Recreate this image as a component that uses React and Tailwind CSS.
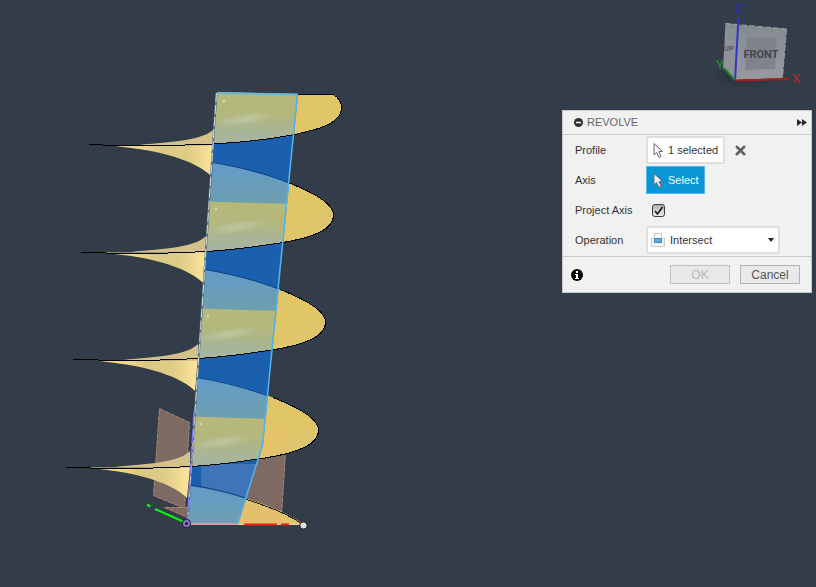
import React from 'react';
import { X } from 'lucide-react';

const FLIGHTS = [
  { id: 0, shift: 'translate(0 0)' },
  { id: 1, shift: 'translate(-8 107)' },
  { id: 2, shift: 'translate(-15 215)' },
];

const HORNS = [
  { id: 0, shift: 'translate(0 0)' },
  { id: 1, shift: 'translate(-8 107)' },
  { id: 2, shift: 'translate(-16 215)' },
  { id: 3, shift: 'translate(-24 322)' },
];

const FLIGHT_PATH =
  'M213 162.500C240 167 266 174 288 182.500C315 193 333.500 204 333.500 215C333.500 231 309 238 283 242.500C258 246.500 232 250 206 251.500Z';

const PROFILE = '217,92 298,94 263,445 238,524 187,524';

const Defs = () => (
  <defs>
    <linearGradient id="gold" x1="0" y1="0" x2="1" y2="1">
      <stop offset="0" stopColor="#ddc36b" />
      <stop offset="0.65" stopColor="#e1c664" />
      <stop offset="1" stopColor="#d9c47a" />
    </linearGradient>
    <linearGradient id="horn" gradientUnits="userSpaceOnUse" x1="112" y1="0" x2="214" y2="0">
      <stop offset="0" stopColor="#f5dc8c" />
      <stop offset="0.35" stopColor="#ecd48a" />
      <stop offset="0.5" stopColor="#dbc883" />
      <stop offset="0.75" stopColor="#dfcc86" />
      <stop offset="1" stopColor="#fde59b" />
    </linearGradient>
    <linearGradient id="sky" gradientUnits="userSpaceOnUse" x1="0" y1="162" x2="0" y2="204">
      <stop offset="0" stopColor="#639bca" />
      <stop offset="1" stopColor="#6d9fae" />
    </linearGradient>
    <linearGradient id="olive" gradientUnits="userSpaceOnUse" x1="0" y1="202" x2="0" y2="250">
      <stop offset="0" stopColor="#b6b979" />
      <stop offset="0.45" stopColor="#b2b77d" />
      <stop offset="0.7" stopColor="#aab591" />
      <stop offset="1" stopColor="#a5b5a1" />
    </linearGradient>
    <radialGradient id="shine">
      <stop offset="0" stopColor="#c4cba9" stopOpacity="0.8" />
      <stop offset="1" stopColor="#c4cba9" stopOpacity="0" />
    </radialGradient>
    <clipPath id="profile">
      <polygon points={PROFILE} />
    </clipPath>
  </defs>
);

const Shine = () => (
  <g>
    <ellipse cx="237" cy="227" rx="32" ry="6" fill="url(#shine)" transform="rotate(-9 237 227)" />
    <circle cx="216" cy="209" r="1.500" fill="#ced7bd" />
  </g>
);

const Model = () => (
  <svg viewBox="60 80 292 456" className="block w-[292px] shrink-0" role="img" aria-label="Helix model">
    <Defs />

    {/* origin planes */}
    <g fill="#7d6b63" stroke="#aa8570" strokeWidth="1" strokeDasharray="5 1">
      <path d="M159.500 408.500L189.500 422.500L184.500 508.500L153.500 495.500Z" />
      <path d="M164.500 507.500H187.500V517.500Z" />
      <path d="M258 453H285.500L281.500 516H236Z" />
    </g>

    {/* horns */}
    {HORNS.map(({ id, shift }) => (
      <g key={id} transform={shift}>
        <path d="M214 129C206 137 190 140 170 142C157 143.500 147 144 138 145L214 146Z" fill="#d4c08a" />
        <path d="M112 145.500H214L211 176C198 163 170 154 145 150C133 148 121 147 112 145.500Z" fill="url(#horn)" />
      </g>
    ))}

    {/* gold faces outside the profile */}
    <path d="M217 94.500H334C338 97 341.500 102 341.500 108C341 124 317 130 292 135C266 140 240 142.500 213 144Z" fill="url(#gold)" />
    {FLIGHTS.map(({ id, shift }) => (
      <path key={id} d={FLIGHT_PATH} transform={shift} fill="url(#gold)" />
    ))}
    <path d="M189 485C227 491 282 507 304 525H187Z" fill="#e2c46b" />
    <path d="M263 430L286 430L284 453L260 458Z" fill="#eebc73" opacity="0.35" />
    <path d="M243 501L281 512V525H236Z" fill="#e7b872" opacity="0.35" />

    {/* profile seen through the body */}
    <g clipPath="url(#profile)">
      <rect x="180" y="90" width="120" height="436" fill="#1b60ae" />
      <path d="M201 464H270V526H201Z" fill="#3f75b8" />
      <g transform="translate(8 -108)">
        <path d="M200 198H310V239C266 247 240 250 200 252Z" fill="url(#olive)" />
        <Shine />
      </g>
      {FLIGHTS.map(({ id, shift }) => (
        <g key={id} transform={shift}>
          <path d={FLIGHT_PATH} fill="url(#sky)" />
          <path d="M207 201.500L236 202.500L292 204V241C264 246 237 249.500 204 251.500Z" fill="url(#olive)" />
          <Shine />
        </g>
      ))}
      <g transform="translate(-23 323)">
        <path d="M210 162.500C245 167 280 178 300 187V204H208Z" fill="url(#sky)" />
      </g>
      <g fill="none" stroke="#0d427f" strokeWidth="1">
        {HORNS.map(({ id, shift }) => (
          <path key={id} transform={shift} d="M213 162.500C240 167 266 174 288 182.500L300 187" />
        ))}
      </g>
    </g>

    {/* silhouette edges */}
    <g fill="none" stroke="#000" strokeWidth="1" shapeRendering="crispEdges">
      <path d="M298 94.500H333C338 97 341.500 102 341.500 108C341 124 317 130 292 135C266 140 240 142.500 213 144C185 145 150 147.500 89 144.500" />
      {FLIGHTS.map(({ id, shift }) => (
        <path
          key={id}
          transform={shift}
          d="M288 182.500C315 193 333.500 204 333.500 215C333.500 231 309 238 283 242.500C258 246.500 232 250 206 251.500C178 253 135 255 81 252"
        />
      ))}
      <path d="M245 499C269 507 289 514 303 525" stroke="#30291d" />
    </g>

    {/* sketch outline */}
    <path d="M217 93L298 94.500" stroke="#69b7d9" strokeWidth="2" fill="none" />
    <path d="M297.500 94L262.500 445L238 523" stroke="#55b2ea" strokeWidth="1.500" fill="none" />
    <path d="M216.500 93L187.500 523" stroke="#597280" strokeWidth="2" fill="none" />
    <path d="M216.500 93L187.500 523" stroke="#d4dadd" strokeWidth="1" strokeDasharray="9 3" fill="none" />
    <path d="M194 412L187.500 519" stroke="#7974ed" strokeWidth="1.500" strokeDasharray="14 3" fill="none" />

    {/* axes */}
    <path d="M190 524H238" stroke="#d99ba9" strokeWidth="2" />
    <path d="M238 524.500H302" stroke="#e5d3b0" strokeWidth="1" />
    <path d="M244 524.500H277M281 524.500H289" stroke="#f01c13" strokeWidth="2" />
    <path d="M155 509L183 521.500" stroke="#05f505" strokeWidth="2" />
    <path d="M148 505L149.500 506" stroke="#05f505" strokeWidth="2.500" strokeLinecap="round" />
    <circle cx="186.500" cy="523.500" r="4.500" fill="#28263a" />
    <circle cx="186.500" cy="523.500" r="2.500" fill="#171526" stroke="#8873c6" strokeWidth="2" />
    <circle cx="303.500" cy="525.500" r="4" fill="#22282f" />
    <circle cx="303.500" cy="525.500" r="3" fill="#e4e4e4" />
  </svg>
);

const ViewCube = () => (
  <svg
    viewBox="708 0 96 96"
    className="absolute right-3 top-0 size-24"
    role="img"
    aria-label="View cube"
  >
    <defs>
      <radialGradient id="shadow">
        <stop offset="0" stopColor="#1f262e" stopOpacity="0.7" />
        <stop offset="1" stopColor="#1f262e" stopOpacity="0" />
      </radialGradient>
      <linearGradient id="face" x1="0" y1="0" x2="0" y2="1">
        <stop offset="0" stopColor="#858a91" />
        <stop offset="1" stopColor="#979a9f" />
      </linearGradient>
    </defs>
    <ellipse cx="744" cy="76" rx="36" ry="14" fill="url(#shadow)" />
    <path d="M725.500 23.500L738 25L735 80L723 68Z" fill="#8f9399" />
    <path d="M725.500 23.500L738 25L786.500 29L782.500 78L735 80Z" fill="url(#face)" />
    <path d="M725.500 23.500L786.500 29" stroke="#a5a9ae" strokeWidth="1" strokeDasharray="6 2" />
    <path d="M786.500 29L782.500 78" stroke="#9a9ea4" strokeWidth="1" strokeDasharray="6 2" />
    <path d="M747 37L777 38L775 69L745 70Z" fill="#7e838b" />
    <g fontFamily="Roboto, sans-serif" fontWeight="700" textAnchor="middle">
      <text x="761" y="58" fontSize="11" fill="#42474e">FRONT</text>
      <text x="729" y="51" fontSize="8" fill="#555a61">UP</text>
    </g>
    <path d="M735 80L738.500 18" stroke="#3333c4" strokeWidth="2" />
    <path d="M735 80.500L789 79" stroke="#a81c20" strokeWidth="2" />
    <path d="M735 80L724 68" stroke="#238334" strokeWidth="2" />
    <g fontFamily="Roboto, sans-serif" fontWeight="500" fontSize="13" textAnchor="middle">
      <text x="739" y="13" fill="#2a2ab8">Z</text>
      <text x="796" y="83" fill="#a32a30">X</text>
      <text x="720" y="69" fill="#238334">Y</text>
    </g>
  </svg>
);

const Cursor = ({ className }) => (
  <svg viewBox="0 0 11 17" className={className} aria-hidden="true">
    <path
      d="M1.500 1.500V13L4 10.500L6.500 15.500L8.500 14.500L6.500 9.500H10Z"
      fill="#f4f4f4"
      stroke="#6a6a6a"
      strokeWidth="1"
    />
  </svg>
);

const Row = ({ label, htmlFor, children }) => (
  <div className="flex h-[30px] items-center">
    <label htmlFor={htmlFor} className="w-[71px] shrink-0">{label}</label>
    {children}
  </div>
);

const RevolvePanel = () => (
  <section className="absolute right-1 top-[110px] w-[250px] border border-[#c6c8ca] bg-[#f1f1f1] font-['Liberation_Sans',sans-serif] text-[11px] text-[#333]">
    <header className="flex h-6 items-center border-b border-[#c8c8c8] pl-[11px] pr-1">
      <button type="button" aria-label="Collapse" className="mr-1">
        <svg viewBox="0 0 9 9" className="size-[9px]">
          <circle cx="4.500" cy="4.500" r="4.500" fill="#303030" />
          <path d="M2 4.500H7" stroke="#fff" strokeWidth="1.500" />
        </svg>
      </button>
      <h2 className="text-[#666]">REVOLVE</h2>
      <button type="button" aria-label="Expand" className="ml-auto">
        <svg viewBox="0 0 10 7" className="h-[7px] w-[10px]">
          <path d="M0 0L5 3.500V0L10 3.500L5 7V3.500L0 7Z" fill="#2b2b2b" />
        </svg>
      </button>
    </header>

    <div className="pl-3">
      <Row label="Profile" htmlFor="profile-pick">
        <button id="profile-pick" type="button" className="flex h-7 w-[79px] items-center gap-1 whitespace-nowrap rounded-xs border-2 border-[#dfdfdf] bg-white pl-1">
          <Cursor className="h-[17px] w-3 shrink-0" />
          1 selected
        </button>
        <button type="button" aria-label="Clear profile" className="ml-2">
          <X className="size-[15px] text-[#606060]" strokeWidth={4} />
        </button>
      </Row>
      <Row label="Axis" htmlFor="axis-pick">
        <button id="axis-pick" type="button" className="flex h-7 w-[59px] items-center gap-1 border border-[#55b5e3] bg-[#0896d7] pl-[5px] text-white">
          <Cursor className="h-[17px] w-3 shrink-0" />
          Select
        </button>
      </Row>
      <Row label="Project Axis" htmlFor="project-axis">
        <span className="ml-[6px] grid size-[13px]">
          <input
            id="project-axis"
            type="checkbox"
            defaultChecked
            className="col-start-1 row-start-1 size-[13px] appearance-none rounded-[3px] border border-[#3c3c3c] bg-linear-to-b from-[#b0b0b0] to-[#eee]"
          />
          <svg viewBox="0 0 13 13" className="pointer-events-none col-start-1 row-start-1 size-[13px]" fill="none">
            <path d="M3 7L5.500 10L10.500 3" stroke="#111" strokeWidth="1.500" />
          </svg>
        </span>
      </Row>
      <Row label="Operation" htmlFor="operation">
        <span className="grid h-7 w-[134px] items-center">
          <select
            id="operation"
            defaultValue="Intersect"
            className="col-start-1 row-start-1 h-7 w-full appearance-none rounded-xs border-2 border-[#dfdfdf] bg-white pl-[22px]"
          >
            <option>Join</option>
            <option>Cut</option>
            <option>Intersect</option>
          </select>
          <svg viewBox="0 0 14 14" className="pointer-events-none col-start-1 row-start-1 ml-[5px] size-[14px]">
            <path d="M3.500 .5H10.500V5H13.500V13.500H.5V5H3.500Z" fill="#f7f7f7" stroke="#c9c9c9" />
            <path d="M3.500 5.500H10.500V9.500H3.500Z" fill="#62aade" stroke="#3e85b9" />
          </svg>
          <svg viewBox="0 0 6 4" className="pointer-events-none col-start-1 row-start-1 mr-[6px] h-1 w-[6px] justify-self-end">
            <path d="M0 0H6L3 4Z" fill="#222" />
          </svg>
        </span>
      </Row>
    </div>

    <footer className="mt-px flex h-9 items-center gap-[10px] border-t border-[#c8c8c8] pl-2 pr-[11px] text-xs">
      <button type="button" aria-label="Info" className="mr-auto">
        <svg viewBox="0 0 12 12" className="size-3">
          <circle cx="6" cy="6" r="6" fill="#000" />
          <path d="M5 2H7V4H5ZM4 5H7V9H8V10H4V9H5V6H4Z" fill="#fff" />
        </svg>
      </button>
      <button type="button" disabled className="h-[19px] w-[60px] border border-[#bdbdbd] bg-[#e9e9e9] text-[#b7b7b7]">OK</button>
      <button type="button" className="h-[19px] w-[60px] border border-[#b3b3b3] bg-[#e9e9e9] text-[#555]">Cancel</button>
    </footer>
  </section>
);

export default function App() {
  return (
    <main className="relative min-h-screen overflow-hidden bg-[#333d49] pl-[60px] pt-20">
      <Model />
      <ViewCube />
      <RevolvePanel />
    </main>
  );
}
